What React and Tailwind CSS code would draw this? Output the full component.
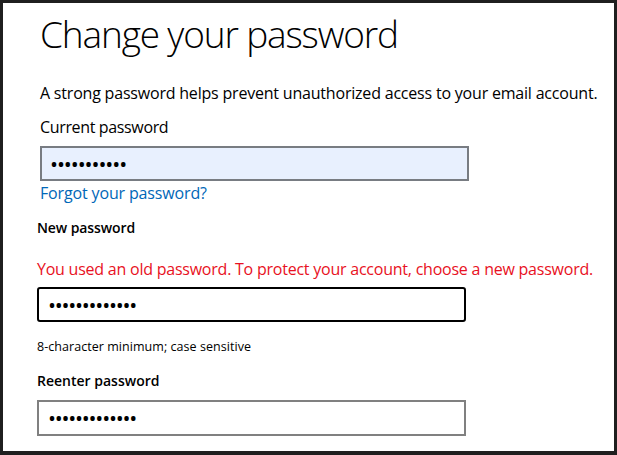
export default function App() {
  return (
    <div className="w-[617px] h-[455px] bg-[#1f1f1f] pt-[3px] pl-[3px] pr-[3px] pb-[4px]">
      <div className="w-full h-full bg-white overflow-hidden font-['Segoe_UI','Open_Sans',sans-serif] text-black">
        <div className="pl-[37px]">
          <h1 className="text-[37px] font-light leading-[44px] pt-[9px] tracking-[-1.15px] text-black">Change your password</h1>
          <p className="mt-[27px] text-[16px] leading-[20px] tracking-[-0.2px] text-black">A strong password helps prevent unauthorized access to your email account.</p>
          <div className="mt-[14px] text-[16px] leading-[20px] tracking-[-0.35px] text-black">Current password</div>
          <div className="mt-[9px] w-[429px] h-[35px] border-2 border-[#787c82] bg-[#e8f0fe] flex items-center pl-[9px] text-[16px] font-bold tracking-[0.9px] text-black">•••••••••••</div>
          <div className="mt-[2px] text-[16px] leading-[20px] tracking-[-0.15px] text-[#0067b8]">Forgot your password?</div>
        </div>
        <div className="pl-[34px]">
          <div className="mt-[16px] text-[14px] font-semibold leading-[18px] tracking-[-0.1px] text-black">New password</div>
          <div className="mt-[22px] text-[16px] leading-[20px] tracking-[-0.23px] text-[#e81123]">You used an old password. To protect your account, choose a new password.</div>
          <div className="mt-[8px] w-[429px] h-[35px] border-2 border-black rounded-[3px] flex items-center pl-[10px] text-[16px] font-bold tracking-[0.75px] text-black">•••••••••••••</div>
          <div className="mt-[17px] text-[12.5px] leading-[16px] tracking-[0.05px] text-black">8-character minimum; case sensitive</div>
          <div className="mt-[17px] text-[14px] font-semibold leading-[18px] tracking-[0px] text-black">Reenter password</div>
          <div className="mt-[10px] w-[429px] h-[36px] border-2 border-[#808080] flex items-center pl-[10px] text-[16px] font-bold tracking-[0.75px] text-black">•••••••••••••</div>
        </div>
      </div>
    </div>
  );
}
